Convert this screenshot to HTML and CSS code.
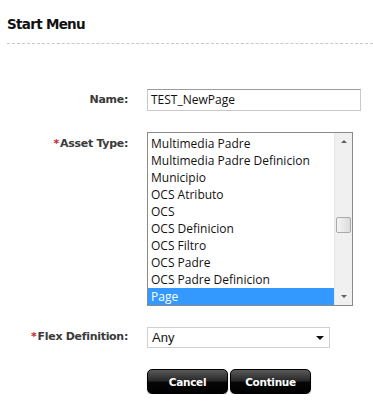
FILE: index.html
```html
<!DOCTYPE html>
<html>
<head>
<meta charset="utf-8">
<link rel="stylesheet" href="styles.css">
</head>
<body>
<div class="page">
  <h1 class="title">Start Menu</h1>
  <div class="rule"></div>
  <div class="form">
    <div class="label name-label">Name:</div>
    <div class="field"><div class="textbox">TEST_NewPage</div></div>

    <div class="label asset-label"><span class="req">*</span>Asset Type:</div>
    <div class="field">
      <div class="listbox">
        <div class="items">
          <div class="item">Multimedia Padre</div>
          <div class="item">Multimedia Padre Definicion</div>
          <div class="item">Municipio</div>
          <div class="item">OCS Atributo</div>
          <div class="item">OCS</div>
          <div class="item">OCS Definicion</div>
          <div class="item">OCS Filtro</div>
          <div class="item">OCS Padre</div>
          <div class="item">OCS Padre Definicion</div>
          <div class="item selected">Page</div>
        </div>
        <div class="scrollbar">
          <div class="arrow up"></div>
          <div class="track"><div class="thumb"></div></div>
          <div class="arrow down"></div>
        </div>
      </div>
    </div>

    <div class="label flex-label"><span class="req">*</span>Flex Definition:</div>
    <div class="field">
      <div class="dropdown"><span>Any</span><span class="caret"></span></div>
    </div>

    <div class="spacer"></div>
    <div class="buttons">
      <button class="btn cancel">Cancel</button>
      <button class="btn continue">Continue</button>
    </div>
  </div>
</div>
</body>
</html>
```
FILE: styles.css
```css
html, body {
  margin: 0;
  padding: 0;
  background: #fff;
}
.page {
  padding: 0 0 0 7px;
  font-family: "DejaVu Sans", Verdana, sans-serif;
}
.title {
  margin: 0;
  padding-top: 16px;
  font-size: 13.5px;
  line-height: 17px;
  font-weight: bold;
  color: #111;
  letter-spacing: -0.7px;
}
.rule {
  margin-top: 10px;
  border-top: 1px dashed #c8c8c8;
}
.form {
  display: grid;
  grid-template-columns: 121px auto;
  column-gap: 19px;
  margin-top: 45px;
}
.label {
  text-align: right;
  font-size: 11px;
  font-weight: bold;
  color: #3a3a3a;
  font-family: "DejaVu Sans", Verdana, sans-serif;
  letter-spacing: -0.3px;
}
.req {
  color: #c0262c;
  margin-right: 1px;
}
.name-label {
  line-height: 22px;
}
.asset-label {
  margin-top: 21px;
  padding-top: 5px;
  line-height: 14px;
}
.flex-label {
  margin-top: 21px;
  line-height: 20px;
}
.field {
  font-family: "Open Sans", "Noto Sans", sans-serif;
}
.textbox {
  height: 20px;
  border: 1px solid #c9c9c9;
  border-top-color: #9c9c9c;
  font-size: 12px;
  line-height: 20px;
  padding-left: 3px;
  box-sizing: content-box;
  color: #111;
  width: 209px;
}
.listbox {
  margin-top: 21px;
  width: 204px;
  height: 172px;
  border: 1px solid #8a8a8a;
  display: flex;
}
.items {
  flex: 1;
  padding-top: 2px;
}
.item {
  height: 17px;
  line-height: 18px;
  font-size: 12px;
  padding-left: 3px;
  color: #111;
  white-space: nowrap;
}
.item.selected {
  background: #3399ff;
  color: #fff;
}
.scrollbar {
  width: 17px;
  display: flex;
  flex-direction: column;
  background: #f0f0f0;
  border-left: 1px solid #e6e6e6;
}
.arrow {
  height: 17px;
  display: flex;
  align-items: center;
  justify-content: center;
}
.arrow::before {
  content: "";
  border-left: 3px solid transparent;
  border-right: 3px solid transparent;
}
.arrow.up::before {
  border-bottom: 3px solid #606060;
}
.arrow.down::before {
  border-top: 3px solid #606060;
}
.track {
  flex: 1;
  position: relative;
}
.thumb {
  position: absolute;
  left: 1px;
  right: 1px;
  top: 67px;
  height: 14px;
  border: 1px solid #a9a9a9;
  border-radius: 2px;
  background: linear-gradient(to right, #f4f4f4, #dcdcdc);
}
.dropdown {
  margin-top: 21px;
  height: 19px;
  border: 1px solid #cfcfcf;
  display: flex;
  align-items: center;
  justify-content: space-between;
  font-family: "Liberation Sans", Arial, sans-serif;
  font-size: 13px;
  padding: 0 5px 0 4px;
  color: #111;
  box-sizing: content-box;
  width: 172px;
}
.caret {
  border-left: 4px solid transparent;
  border-right: 4px solid transparent;
  border-top: 4px solid #111;
}
.buttons {
  display: flex;
  gap: 2px;
  margin-top: 21px;
}
.btn {
  width: 81px;
  height: 25px;
  border: 1px solid #000;
  border-radius: 5px;
  background: linear-gradient(to bottom, #5a5a5a 0%, #2a2a2a 45%, #050505 55%, #000 100%);
  color: #fff;
  font-family: "DejaVu Sans", Verdana, sans-serif;
  font-size: 10.5px;
  font-weight: bold;
  box-shadow: 0 1px 1px rgba(0,0,0,0.35);
  padding: 0;
  letter-spacing: -0.3px;
}
```
